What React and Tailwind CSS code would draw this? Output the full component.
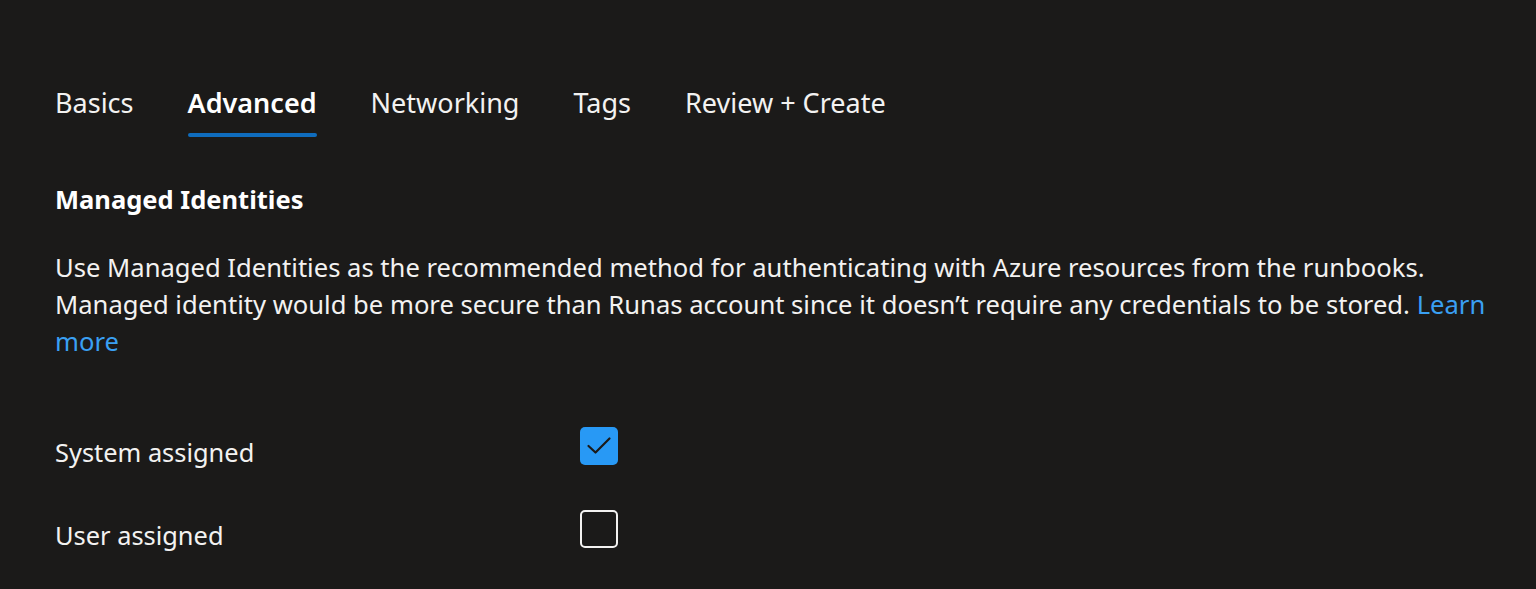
import React from "react";

export default function App() {
  const tabs = ["Basics", "Advanced", "Networking", "Tags", "Review + Create"];
  return (
    <div
      className="w-[1536px] h-[589px] bg-[#1b1a19] text-[#f3f2f1] overflow-hidden"
      style={{ fontFamily: '"Segoe UI", "Noto Sans", "Open Sans", sans-serif' }}
    >
      <div className="pl-[55px] pt-[83px]">
        <div className="flex gap-[54px] text-[27px] leading-[40px]">
          {tabs.map((t) => (
            <div key={t} className="flex flex-col">
              <span className={t === "Advanced" ? "font-semibold text-white" : "text-[#f3f2f1]"}>{t}</span>
              <div className={t === "Advanced" ? "h-[4px] mt-[10px] bg-[#0f6cbd] rounded-sm" : "h-[4px] mt-[10px]"} />
            </div>
          ))}
        </div>
        <h2 className="mt-[46px] text-[25.5px] font-bold leading-[32px] text-white">Managed Identities</h2>
        <div className="mt-[34px] text-[25.6px] leading-[37px]">
          <div>Use Managed Identities as the recommended method for authenticating with Azure resources from the runbooks.</div>
          <div>
            Managed identity would be more secure than Runas account since it doesn’t require any credentials to be stored.{" "}
            <a className="text-[#3aa0f3]">Learn</a>
          </div>
          <div>
            <a className="text-[#3aa0f3]">more</a>
          </div>
        </div>
        <div className="mt-[67px] flex items-center h-[38px]">
          <span className="w-[525px] mt-[12px] text-[25.4px] leading-[34px]">System assigned</span>
          <div className="w-[38px] h-[38px] rounded-[5px] bg-[#2899f5] flex items-center justify-center">
            <svg width="38" height="38" viewBox="0 0 38 38" fill="none">
              <path d="M8.5 19L15.5 25.5L29.5 11.5" stroke="#1b1a19" strokeWidth="2.2" strokeLinecap="round" strokeLinejoin="round" />
            </svg>
          </div>
        </div>
        <div className="mt-[45px] flex items-center h-[38px]">
          <span className="w-[525px] mt-[12px] text-[25.4px] leading-[34px]">User assigned</span>
          <div className="w-[38px] h-[38px] rounded-[5px] border-2 border-[#f3f2f1]" />
        </div>
      </div>
    </div>
  );
}
